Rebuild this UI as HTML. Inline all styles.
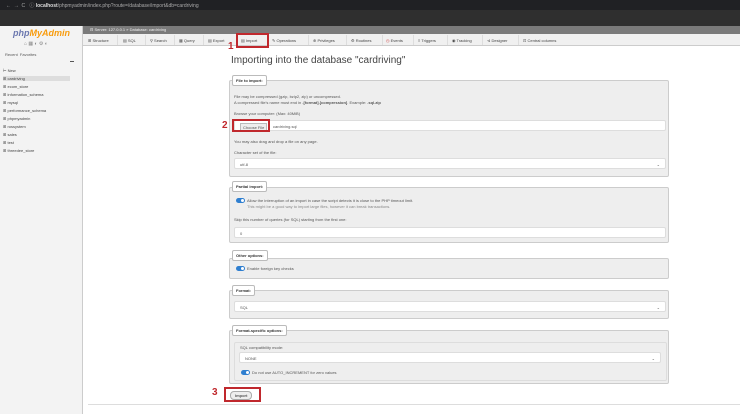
<!DOCTYPE html>
<html><head><meta charset="utf-8"><style>
*{margin:0;padding:0;box-sizing:border-box}
body{width:740px;height:414px;overflow:hidden;background:#fff;font-family:"Liberation Sans",sans-serif;position:relative;color:#333}
.a{position:absolute}
.t{font-size:4px;color:#555;white-space:nowrap}
.panel{position:absolute;left:229px;width:440px;background:#eee;border:1px solid #ccc;border-radius:2px}
.leg{position:absolute;left:232px;background:#fff;border:1px solid #bbb;border-radius:2px;font-size:4px;font-weight:bold;padding:2px 3px;color:#333}
.in{position:absolute;background:#fff;border:1px solid #ddd;border-radius:2px;height:11px;font-size:4px;color:#555;padding:3px 5px}
.tog{position:absolute;width:9px;height:5px;border-radius:3px;background:#2f7fd0}
.tog:after{content:"";position:absolute;right:1px;top:1px;width:3px;height:3px;border-radius:2px;background:#fff}
.red{position:absolute;border:2px solid #c0282d}
.num{position:absolute;color:#c0282d;font-weight:bold;font-size:10px}
.nv{position:absolute;top:38px;font-size:4px;color:#444;white-space:nowrap}
.sep{position:absolute;top:35px;width:1px;height:10px;background:#ddd}
</style></head><body>
<div class="a" style="left:0;top:0;width:740px;height:10px;background:#202124"></div>
<div class="a t" style="left:6px;top:2px;color:#aaa;font-size:5px">←&nbsp;&nbsp;→&nbsp;&nbsp;C&nbsp;&nbsp;&nbsp;ⓘ <b style="color:#ddd">localhost</b>/phpmyadmin/index.php?route=/database/import&amp;db=cardriving</div>
<div class="a" style="left:0;top:10px;width:740px;height:16px;background:#2f2f2f"></div>
<div class="a" style="left:0;top:26px;width:740px;height:8px;background:#7a7a7a"></div>
<div class="a t" style="left:90px;top:27px;color:#eee">⊟ Server: 127.0.0.1 » Database: cardriving</div>
<div class="a" style="left:83px;top:34px;width:657px;height:12px;background:#f0f0f0;border-bottom:1px solid #ccc"></div>
<div class="nv" style="left:88px">⊞ Structure</div><div class="sep" style="left:117px"></div>
<div class="nv" style="left:123px">▤ SQL</div><div class="sep" style="left:145px"></div>
<div class="nv" style="left:150px">⚲ Search</div><div class="sep" style="left:174px"></div>
<div class="nv" style="left:179px">▦ Query</div><div class="sep" style="left:203px"></div>
<div class="nv" style="left:208px">▤ Export</div><div class="sep" style="left:236px"></div>
<div class="nv" style="left:241px">▤ Import</div><div class="sep" style="left:268px"></div>
<div class="nv" style="left:272px">✎ Operations</div><div class="sep" style="left:308px"></div>
<div class="nv" style="left:313px">⊕ Privileges</div><div class="sep" style="left:346px"></div>
<div class="nv" style="left:351px">⚙ Routines</div><div class="sep" style="left:382px"></div>
<div class="nv" style="left:386px"><span style="color:#c33">◷</span> Events</div><div class="sep" style="left:413px"></div>
<div class="nv" style="left:418px">≡ Triggers</div><div class="sep" style="left:447px"></div>
<div class="nv" style="left:452px">◉ Tracking</div><div class="sep" style="left:482px"></div>
<div class="nv" style="left:487px">⊲ Designer</div><div class="sep" style="left:518px"></div>
<div class="nv" style="left:523px">⊡ Central columns</div>
<div class="red" style="left:236px;top:33px;width:33px;height:15px"></div>
<div class="num" style="left:228px;top:41px">1</div>
<div class="a" style="left:0;top:26px;width:83px;height:388px;background:#f3f3f3;border-right:1px solid #ccc"></div>
<div class="a" style="left:13px;top:28px;font-size:9px;font-weight:bold;font-style:italic;color:#6c78af">php<span style="color:#f89c0e">MyAdmin</span></div>
<div class="a t" style="left:24px;top:41px;color:#888;font-size:5px">⌂ ▦ ◐ ⚙ ◐</div>
<div class="a t" style="left:5px;top:52px">Recent&nbsp; Favorites</div>
<div class="a" style="left:70px;top:61px;width:4px;height:1px;background:#555"></div>
<div class="a t" style="left:3px;top:67px;line-height:8px;color:#444">
⊢ New<br><span style="background:#ddd;padding-right:45px">⊞ cardriving</span><br>⊞ ecom_store<br>⊞ information_schema<br>⊞ mysql<br>⊞ performance_schema<br>⊞ phpmyadmin<br>⊞ rossystem<br>⊞ sales<br>⊞ test<br>⊞ threedee_store</div>
<div class="a" style="left:231px;top:55px;font-size:10px;color:#444">Importing into the database "cardriving"</div>
<div class="panel" style="top:80px;height:97px"></div>
<div class="leg" style="top:75px">File to import:</div>
<div class="a t" style="left:234px;top:94px;line-height:6px">File may be compressed (gzip, bzip2, zip) or uncompressed.<br>A compressed file's name must end in <b>.[format].[compression]</b>. Example: <b>.sql.zip</b></div>
<div class="a t" style="left:234px;top:111px">Browse your computer: (Max: 40MiB)</div>
<div class="in" style="left:234px;top:120px;width:432px;height:11px"></div>
<div class="a t" style="left:240px;top:123px;background:#eee;border:1px solid #bbb;padding:1px 2px">Choose File</div>
<div class="a t" style="left:273px;top:124px">cardriving.sql</div>
<div class="red" style="left:232px;top:119px;width:38px;height:13px"></div>
<div class="num" style="left:222px;top:120px">2</div>
<div class="a t" style="left:234px;top:139px">You may also drag and drop a file on any page.</div>
<div class="a t" style="left:234px;top:150px">Character set of the file:</div>
<div class="in" style="left:234px;top:158px;width:432px">utf-8<span style="float:right">⌄</span></div>
<div class="panel" style="top:187px;height:56px"></div>
<div class="leg" style="top:181px">Partial import:</div>
<div class="tog" style="left:236px;top:198px"></div>
<div class="a t" style="left:247px;top:198px;line-height:6px">Allow the interruption of an import in case the script detects it is close to the PHP timeout limit.<br><span style="color:#888">This might be a good way to import large files, however it can break transactions.</span></div>
<div class="a t" style="left:234px;top:217px">Skip this number of queries (for SQL) starting from the first one:</div>
<div class="in" style="left:234px;top:227px;width:432px">0</div>
<div class="panel" style="top:258px;height:21px"></div>
<div class="leg" style="top:250px">Other options:</div>
<div class="tog" style="left:236px;top:266px"></div>
<div class="a t" style="left:247px;top:266px">Enable foreign key checks</div>
<div class="panel" style="top:290px;height:29px"></div>
<div class="leg" style="top:285px">Format:</div>
<div class="in" style="left:234px;top:301px;width:432px">SQL<span style="float:right">⌄</span></div>
<div class="panel" style="top:330px;height:54px"></div>
<div class="leg" style="top:325px">Format-specific options:</div>
<div class="a" style="left:234px;top:342px;width:433px;height:39px;border:1px solid #ddd;border-radius:2px"></div>
<div class="a t" style="left:240px;top:345px">SQL compatibility mode:</div>
<div class="in" style="left:239px;top:352px;width:422px">NONE<span style="float:right">⌄</span></div>
<div class="tog" style="left:241px;top:370px"></div>
<div class="a t" style="left:252px;top:370px">Do not use AUTO_INCREMENT for zero values</div>
<div class="a t" style="left:230px;top:391px;background:#eee;border:1px solid #aaa;border-radius:4px;padding:1px 4px;font-weight:bold">Import</div>
<div class="red" style="left:224px;top:387px;width:37px;height:15px"></div>
<div class="num" style="left:212px;top:387px">3</div>
<div class="a" style="left:88px;top:404px;width:652px;height:1px;background:#ddd"></div>
</body></html>
